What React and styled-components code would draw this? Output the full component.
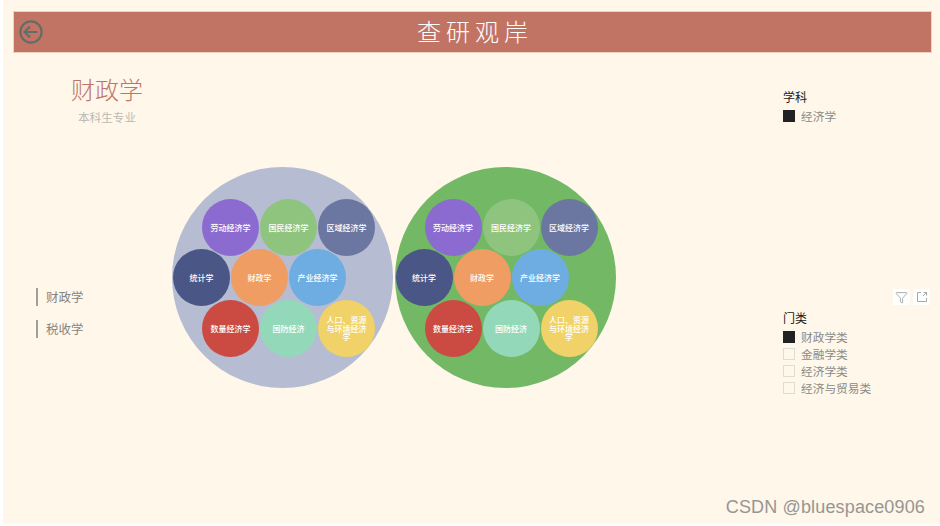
import React from "react";
import styled, { createGlobalStyle } from "styled-components";
import { Filter } from "lucide-react";

const GlobalStyle = createGlobalStyle`
  html, body { margin: 0; padding: 0; background: #fff; }
  body { font-family: "Noto Sans CJK SC", "Liberation Sans", sans-serif; }
`;

const Page = styled.div`
  position: relative;
  width: 937px;
  height: 524px;
  margin-left: 3px;
  padding-top: 12px;
  box-sizing: border-box;
  background: #fef7ea;
  overflow: hidden;
`;

const Header = styled.header`
  position: relative;
  height: 40px;
  margin: 0 9px 0 11px;
  padding: 0 0 3px 5px;
  box-sizing: border-box;
  background: #c27464;
  box-shadow: 0 0 0 1px #f0cfbc;
  display: flex;
  align-items: center;
  justify-content: center;
  color: #fff;
  font-size: 24px;
  font-weight: 300;
  letter-spacing: 5px;
`;

const BackButton = styled.svg`
  position: absolute;
  left: 5px;
  top: 8px;
  width: 24px;
  height: 24px;
  fill: none;
  stroke: #656c68;
  stroke-width: 2.2;
`;

const Content = styled.main`
  display: flex;
`;

const LeftColumn = styled.section`
  width: 169px;
  flex: none;
`;

const TitleBlock = styled.div`
  width: 208px;
  margin-top: 20px;
  text-align: center;
`;

const Title = styled.h1`
  margin: 0;
  font-size: 24px;
  line-height: 34px;
  font-weight: 300;
  color: #c27464;
`;

const Subtitle = styled.p`
  margin: 2px 0 0;
  font-size: 11.6px;
  line-height: 18px;
  color: #bbb9b2;
`;

const Tabs = styled.ul`
  list-style: none;
  margin: 162px 0 0 33px;
  padding: 0;
  display: flex;
  flex-direction: column;
  gap: 14px;
`;

const Tab = styled.li`
  height: 18px;
  border-left: 2px solid #a09f9c;
  padding-left: 8px;
  font-size: 12.5px;
  line-height: 18px;
  color: #858581;
`;

const Charts = styled.section`
  display: flex;
  gap: 1.5px;
  margin-top: 115px;
  flex: none;
`;

const Pack = styled.div`
  position: relative;
  width: 221px;
  height: 221px;
  border-radius: 50%;
  background: ${(p) => p.$color};
`;

const Bubble = styled.div`
  position: absolute;
  left: ${(p) => p.$x}px;
  top: ${(p) => p.$y}px;
  width: 57px;
  height: 57px;
  padding: 1px 8px 0;
  box-sizing: border-box;
  border-radius: 50%;
  background: ${(p) => p.$color};
  display: flex;
  align-items: center;
  justify-content: center;
  text-align: center;
  color: #fff;
  font-size: 8px;
  line-height: 8.4px;
  font-weight: 500;
`;

const RightColumn = styled.aside`
  flex: 1;
  display: flex;
  flex-direction: column;
  margin-left: 167.5px;
`;

const Legend = styled.div`
  margin-top: ${(p) => p.$top}px;
`;

const LegendTitle = styled.div`
  font-size: 12px;
  line-height: 17px;
  color: #222;
  margin-bottom: 2px;
`;

const LegendItem = styled.div`
  display: flex;
  align-items: center;
  gap: 6px;
  height: 17px;
  font-size: 11.7px;
  color: #8b8a86;
`;

const Check = styled.span`
  width: 12px;
  height: 12px;
  box-sizing: border-box;
  flex: none;
  background: ${(p) => (p.$on ? "#222" : "transparent")};
  border: 1px solid ${(p) => (p.$on ? "#222" : "#dfdcd2")};
`;

const Toolbar = styled.div`
  display: flex;
  justify-content: flex-end;
  gap: 3px;
  margin: 165px 10px 0 0;
`;

const ToolButton = styled.span`
  width: 17px;
  height: 16px;
  background: #fff;
  display: flex;
  align-items: center;
  justify-content: center;
  color: #7f8482;
`;

const ExpandIcon = styled.svg`
  width: 12px;
  height: 12px;
  fill: none;
  stroke: #a5a9a7;
  stroke-width: 1;
`;

const Watermark = styled.div`
  position: absolute;
  right: 15px;
  bottom: 7px;
  font-family: "Liberation Sans", sans-serif;
  font-size: 18px;
  letter-spacing: 0.15px;
  line-height: 20px;
  color: #969694;
`;

const rows = [
  { name: "劳动经济学", x: 30, y: 32, color: "#8c6bd1" },
  { name: "国民经济学", x: 88, y: 32, color: "#8fc47f" },
  { name: "区域经济学", x: 146, y: 32, color: "#6b76a1" },
  { name: "统计学", x: 1, y: 82, color: "#4a5685" },
  { name: "财政学", x: 59, y: 82, color: "#ef9d62" },
  { name: "产业经济学", x: 117, y: 82, color: "#6eade2" },
  { name: "数量经济学", x: 30, y: 133, color: "#cb4b42" },
  { name: "国防经济", x: 88, y: 133, color: "#93d9b9" },
  { name: "人口、资源与环境经济学", x: 146, y: 133, color: "#f0d268" },
];

const legendItems = [
  { name: "财政学类", on: true },
  { name: "金融学类" },
  { name: "经济学类" },
  { name: "经济与贸易类" },
];

const BubbleChart = ({ color }) => (
  <Pack $color={color}>
    {rows.map((b) => (
      <Bubble key={b.name} $x={b.x} $y={b.y} $color={b.color}>
        {b.name}
      </Bubble>
    ))}
  </Pack>
);

export default function App() {
  return (
    <>
      <GlobalStyle />
      <Page>
        <Header>
          <BackButton viewBox="0 0 24 24">
            <circle cx="12" cy="12" r="10.6" />
            <path d="M18.5 12H6M11 6.5L5.5 12L11 17.5" />
          </BackButton>
          查研观岸
        </Header>
        <Content>
          <LeftColumn>
            <TitleBlock>
              <Title>财政学</Title>
              <Subtitle>本科生专业</Subtitle>
            </TitleBlock>
            <Tabs>
              <Tab>财政学</Tab>
              <Tab>税收学</Tab>
            </Tabs>
          </LeftColumn>
          <Charts>
            <BubbleChart color="#b6bcd2" />
            <BubbleChart color="#72b865" />
          </Charts>
          <RightColumn>
            <Legend $top={36}>
              <LegendTitle>学科</LegendTitle>
              <LegendItem>
                <Check $on />
                经济学
              </LegendItem>
            </Legend>
            <Toolbar>
              <ToolButton>
                <Filter size={13} strokeWidth={1.2} />
              </ToolButton>
              <ToolButton>
                <ExpandIcon viewBox="0 0 12 12">
                  <path d="M5 1.5H1.5V10.5H10.5V7M7.5 1.5H10.5V4.5M10.5 1.5L7 5" />
                </ExpandIcon>
              </ToolButton>
            </Toolbar>
            <Legend $top={4}>
              <LegendTitle>门类</LegendTitle>
              {legendItems.map((item) => (
                <LegendItem key={item.name}>
                  <Check $on={item.on} />
                  {item.name}
                </LegendItem>
              ))}
            </Legend>
          </RightColumn>
        </Content>
        <Watermark>CSDN @bluespace0906</Watermark>
      </Page>
    </>
  );
}
